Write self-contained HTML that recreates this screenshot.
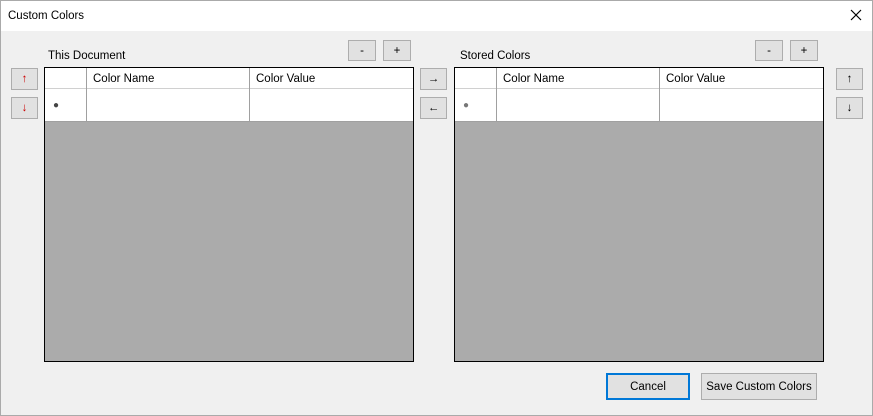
<!DOCTYPE html><html><head><style>
*{box-sizing:border-box}body{margin:0;width:873px;height:416px;background:#f0f0f0;font-family:"Liberation Sans",sans-serif;font-size:11.5px;color:#000;position:relative;overflow:hidden}
.a{position:absolute}
.frame{left:0;top:0;width:873px;height:416px;border:1px solid #aaa}
.title{left:0;top:0;width:873px;height:31px;background:#fff}
.btn{position:absolute;background:#e1e1e1;border:1px solid #adadad;display:flex;align-items:center;justify-content:center;font-size:11.5px}
.grid{position:absolute;border:1px solid #000;background:#ababab;width:370px;height:295px;top:67px}
.hdr{position:absolute;left:0;top:0;width:368px;height:21px;background:#fff;border-bottom:1px solid #d0d0d0}
.row{position:absolute;left:0;top:21px;width:368px;height:33px;background:#fff;border-bottom:1px solid #a0a0a0}
.v{position:absolute;top:0;height:54px;width:1px;background:#a0a0a0}
.t{position:absolute;top:5px}
</style></head><body>
<div class="a title"></div>
<div class="a" style="left:8px;top:10px">Custom Colors</div>
<svg class="a" style="left:850px;top:9px" width="12" height="12"><path d="M1 1L11 11M11 1L1 11" stroke="#000" stroke-width="1.2"/></svg>
<div class="a" style="left:48px;top:50px">This Document</div>
<div class="a" style="left:460px;top:50px">Stored Colors</div>
<div class="btn" style="left:348px;top:40px;width:28px;height:21px">-</div>
<div class="btn" style="left:383px;top:40px;width:28px;height:21px">+</div>
<div class="btn" style="left:755px;top:40px;width:28px;height:21px">-</div>
<div class="btn" style="left:790px;top:40px;width:28px;height:21px">+</div>
<div class="btn" style="left:11px;top:68px;width:27px;height:22px;color:#c00">↑</div>
<div class="btn" style="left:11px;top:97px;width:27px;height:22px;color:#c00">↓</div>
<div class="btn" style="left:420px;top:68px;width:27px;height:22px">→</div>
<div class="btn" style="left:420px;top:97px;width:27px;height:22px">←</div>
<div class="btn" style="left:836px;top:68px;width:27px;height:22px">↑</div>
<div class="btn" style="left:836px;top:97px;width:27px;height:22px">↓</div>
<div class="grid" style="left:44px"><div class="hdr"></div><div class="row"></div>
<div class="v" style="left:41px"></div><div class="v" style="left:204px"></div>
<div class="t" style="left:48px">Color Name</div><div class="t" style="left:211px">Color Value</div>
<div class="a" style="left:8px;top:32px;font-size:10px;color:#444">●</div></div>
<div class="grid" style="left:454px"><div class="hdr"></div><div class="row"></div>
<div class="v" style="left:41px"></div><div class="v" style="left:204px"></div>
<div class="t" style="left:48px">Color Name</div><div class="t" style="left:211px">Color Value</div>
<div class="a" style="left:8px;top:32px;font-size:10px;color:#777">●</div></div>
<div class="btn" style="left:606px;top:373px;width:84px;height:27px;border:2px solid #0078d7">Cancel</div>
<div class="btn" style="left:701px;top:373px;width:116px;height:27px">Save Custom Colors</div>
<div class="a frame"></div>
</body></html>
